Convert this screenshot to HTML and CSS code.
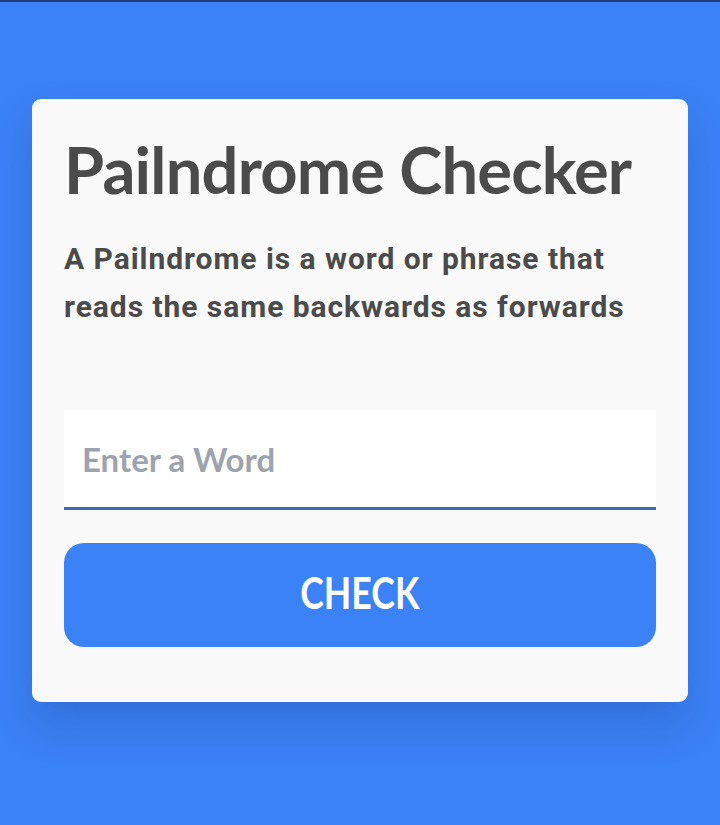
FILE: index.html
```html
<!DOCTYPE html>
<html lang="en">
<head>
<meta charset="utf-8">
<title>Pailndrome Checker</title>
<link rel="stylesheet" href="styles.css">
</head>
<body>
<main class="card">
  <h1 class="title">Pailndrome Checker</h1>
  <p class="desc">A Pailndrome is a word or phrase that reads the same backwards as forwards</p>
  <input class="word" type="text" placeholder="Enter a Word">
  <button class="check" type="button"><span class="check-label">CHECK</span></button>
</main>
</body>
</html>
```
FILE: styles.css
```css
html, body {
  margin: 0;
  padding: 0;
}
body {
  background: #3b82f6;
  border-top: 2px solid #1e3a78;
  min-height: 823px;
  box-sizing: border-box;
  padding: 97px 32px 0;
}
.card {
  background: #f9f9f9;
  border-radius: 9px;
  padding: 30px 32px 55px;
  display: flex;
  flex-direction: column;
  box-shadow: 0 22px 40px rgba(20, 50, 120, 0.22);
}
.title {
  margin: 0;
  font-family: Lato, "Liberation Sans", sans-serif;
  font-weight: 700;
  font-size: 65px;
  line-height: 80px;
  color: #4b4b4b;
  letter-spacing: -0.8px;
  white-space: nowrap;
}
.desc {
  margin: 26px 0 0;
  font-family: Roboto, "Liberation Sans", sans-serif;
  font-weight: 700;
  font-size: 30px;
  line-height: 48px;
  letter-spacing: 0.95px;
  color: #4b4b4b;
}
.word {
  margin-top: 79px;
  height: 100px;
  box-sizing: border-box;
  border: none;
  border-bottom: 3px solid #3a6ab8;
  background: #fff;
  padding: 0 18px;
  font-family: Lato, "Liberation Sans", sans-serif;
  font-size: 33px;
  color: #4b4b4b;
  outline: none;
}
.word::placeholder {
  color: #9ca3af;
  font-weight: 700;
}
.check {
  margin-top: 33px;
  height: 104px;
  padding: 0 0 6px;
  border: none;
  border-radius: 20px;
  background: #3b82f6;
  color: #fff;
  font-family: Lato, "Liberation Sans", sans-serif;
  font-weight: 700;
  font-size: 43px;
}
.check-label {
  display: inline-block;
  transform: scaleX(0.83);
}
```
